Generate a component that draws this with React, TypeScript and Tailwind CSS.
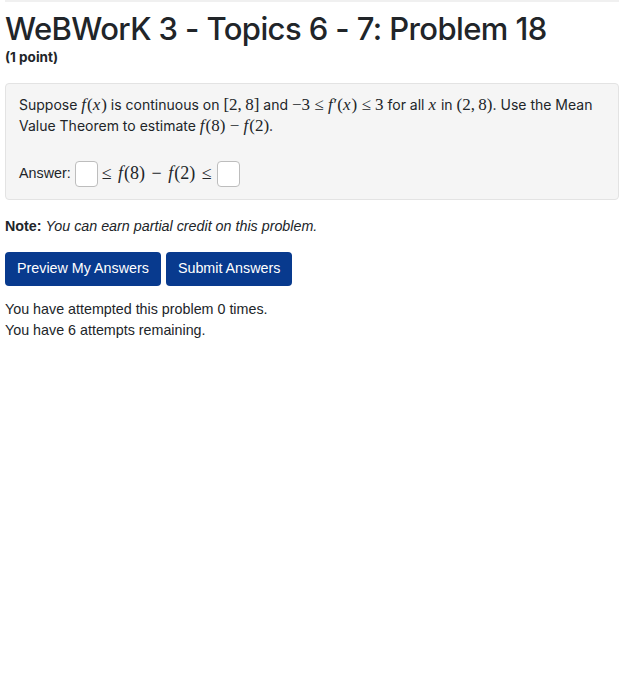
import React from 'react';

const M = ({ children }: { children: React.ReactNode }) => (
  <span className="font-['Liberation_Serif','DejaVu_Serif',serif] text-[17px]">{children}</span>
);
const I = ({ children }: { children: React.ReactNode }) => <i className="pr-[1px]">{children}</i>;

export default function App() {
  return (
    <div className="min-h-[700px] bg-white px-[5px] font-['Liberation_Sans',Arial,sans-serif] text-[14.3px] text-[#212529]">
      <div className="h-[2px] bg-[#f0f0f0]" />
      <h1 className="mt-[9px] font-['Inter',sans-serif] text-[31px] font-medium leading-[36px] tracking-[-0.6px]">
        WeBWorK 3 - Topics 6 - 7: Problem 18
      </h1>
      <div className="mt-[1px] font-['Inter',sans-serif] text-[13.5px] font-bold leading-[18px]">(1 point)</div>

      <div className="mt-[17px] rounded-[4px] border border-[#e3e3e3] bg-[#f5f5f5] px-[13px] pb-[12px] pt-[10px]">
        <p className="font-['Inter',sans-serif] text-[14px] leading-[21px]">
          Suppose <M><I>f</I>(<I>x</I>)</M> is continuous on <M>[2,&thinsp;8]</M> and{' '}
          <M>−3 ≤ <I>f</I>′(<I>x</I>) ≤ 3</M> for all <M><I>x</I></M> in <M>(2,&thinsp;8)</M>. Use the Mean
          Value Theorem to estimate <M><I>f</I>(8) − <I>f</I>(2)</M>.
        </p>
        <div className="mt-[24px] flex items-center">
          <span>Answer:</span>
          <span className="ml-[4px] inline-block h-[26px] w-[23px] rounded-[4px] border border-[#bdbdbd] bg-white" />
          <span className="ml-[4px] mr-[5px] font-['Liberation_Serif','DejaVu_Serif',serif] text-[18px] [word-spacing:2px]">
            ≤ <I>f</I>(8) − <I>f</I>(2) ≤
          </span>
          <span className="inline-block h-[26px] w-[23px] rounded-[4px] border border-[#bdbdbd] bg-white" />
        </div>
      </div>

      <p className="mt-[16px] leading-[20px]">
        <b>Note:</b> <i>You can earn partial credit on this problem.</i>
      </p>

      <div className="mt-[16px] flex gap-[5px]">
        <button className="h-[34px] rounded-[4px] bg-[#083a8e] px-[12px] text-white">
          Preview My Answers
        </button>
        <button className="h-[34px] rounded-[4px] bg-[#083a8e] px-[12px] text-white">
          Submit Answers
        </button>
      </div>

      <div className="mt-[13px] leading-[21px]">
        <p>You have attempted this problem 0 times.</p>
        <p>You have 6 attempts remaining.</p>
      </div>
    </div>
  );
}
